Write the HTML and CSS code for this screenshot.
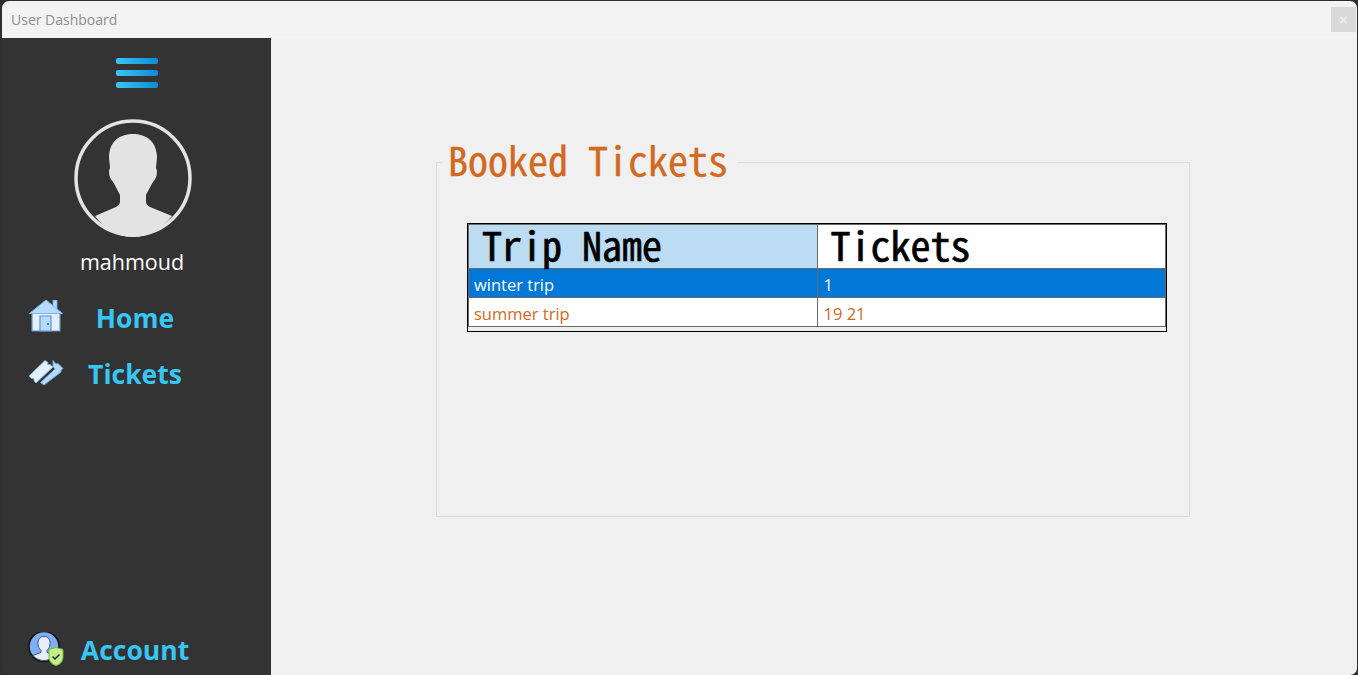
FILE: index.html
```html
<!DOCTYPE html>
<html lang="en">
<head>
    <meta charset="UTF-8">
    <title>User Dashboard</title>
    <link rel="stylesheet" href="styles.css">
</head>
<body>
    <div class="window">
        <header class="titlebar">
            <span class="title">User Dashboard</span>
            <button class="close" type="button">&#215;</button>
        </header>
        <div class="content">
            <aside class="sidebar">
                <svg class="menu-icon" width="42" height="30" viewBox="0 0 42 30">
                    <defs>
                        <linearGradient id="menuGrad">
                            <stop offset="0" stop-color="#38c6f4"/>
                            <stop offset="1" stop-color="#118ad6"/>
                        </linearGradient>
                    </defs>
                    <rect y="0" width="42" height="6" rx="2" fill="url(#menuGrad)"/>
                    <rect y="12" width="42" height="6" rx="2" fill="url(#menuGrad)"/>
                    <rect y="24" width="42" height="6" rx="2" fill="url(#menuGrad)"/>
                </svg>
                <svg class="avatar" width="118" height="118" viewBox="0 0 118 118">
                    <circle cx="59" cy="59" r="57" fill="none" stroke="#e3e3e3" stroke-width="3.500"/>
                    <path fill="#e3e3e3" d="M59 15C47 15 36 21 35 37C35 42 36 46 36 49L35 52C35 56 36 60 39 63C42 68 44 72 46 76L46 83C46 85 44 87 42 88L21 97C31 110 44 118 59 118C74 118 87 110 98 97L76 88C74 87 72 85 72 83L72 76C74 72 76 68 79 63C82 60 83 56 83 52L82 49C82 46 83 42 83 37C82 21 71 15 59 15Z"/>
                </svg>
                <div class="username">mahmoud</div>
                <nav class="nav">
                    <a class="nav-item" href="#">
                        <svg class="nav-icon" width="36" height="36" viewBox="0 2 36 36">
                            <path d="M25 2h4v9h-4z" fill="#b5d9ff" stroke="#6fa8dc"/>
                            <path d="M4 14h28v19H4z" fill="#e3f1ff" stroke="#5c96cf" stroke-width="1.200"/>
                            <path d="M1.500 15.500 18 2l16.500 13.500z" fill="#b5d9ff" stroke="#7fb4e6" stroke-linejoin="round"/>
                            <path d="M12 18h11v15H12z" fill="#b5d9ff" stroke="#5c96cf" stroke-width="1.200"/>
                            <rect x="19" y="25" width="2" height="2" fill="#3f7fbf"/>
                        </svg>
                        <span class="nav-label">Home</span>
                    </a>
                    <a class="nav-item" href="#">
                        <svg class="nav-icon" width="36" height="36" viewBox="0 0 36 36">
                            <path d="M25 4.500 28 8 30 7.500 35 12.500 33 14 33 16 16 29 12.500 26.500 27 13 25 10.500z" fill="#b5d9ff" stroke="#6fa8dc"/>
                            <path d="M1 20 17 4.500 20 6.500 19.500 8.500 22 8.500 25 11 8 27 6 25 6 22.500 3.500 22.500z" fill="#e3f1ff" stroke="#7fb4e6"/>
                        </svg>
                        <span class="nav-label">Tickets</span>
                    </a>
                </nav>
                <a class="nav-item account" href="#">
                    <svg class="nav-icon" width="36" height="36" viewBox="0 1.500 36 36">
                        <circle cx="16" cy="16" r="15" fill="#7eaef5" stroke="#141414" stroke-width="1.500"/>
                        <path d="M16 6c4 0 6 3 6 7 0 3-1 5-3 7v2l8 3c-3 3-7 5-11 5s-9-2-11-5l8-3v-2c-2-2-3-4-3-7 0-4 2-7 6-7z" fill="#e6eefc" stroke="#2c3a55" stroke-width=".8"/>
                        <path d="M28 17l7 2v7c0 5-3 8-7 9-4-1-7-4-7-9v-7z" fill="#c3f08a" stroke="#75b84a"/>
                        <path d="M24.500 26l2.500 2.500 4.500-4.500" fill="none" stroke="#1c2a14" stroke-width="1.500"/>
                    </svg>
                    <span class="nav-label">Account</span>
                </a>
            </aside>
            <main class="main">
                <fieldset class="panel">
                    <legend class="panel-title">Booked Tickets</legend>
                    <div class="table-wrap">
                        <table class="tickets">
                            <thead>
                                <tr>
                                    <th class="sorted">Trip Name</th>
                                    <th>Tickets</th>
                                </tr>
                            </thead>
                            <tbody>
                                <tr class="selected">
                                    <td>winter trip</td>
                                    <td>1</td>
                                </tr>
                                <tr>
                                    <td>summer trip</td>
                                    <td>19 21</td>
                                </tr>
                            </tbody>
                        </table>
                    </div>
                </fieldset>
            </main>
        </div>
    </div>
</body>
</html>
```

FILE: styles.css
```css
* {
    box-sizing: border-box;
}
html, body {
    height: 100%;
}
body {
    margin: 0;
    background: #2e2e2e;
    font-family: "Open Sans", "Noto Sans", sans-serif;
    overflow: hidden;
}
.window {
    height: 675px;
    margin: 0 1px 0 2px;
    padding-top: 1px;
    display: flex;
    flex-direction: column;
}
.titlebar {
    height: 37px;
    flex: none;
    display: flex;
    align-items: center;
    justify-content: space-between;
    padding: 0 1px 0 9px;
    background: #f3f3f3;
    border-radius: 7px 7px 0 0;
}
.title {
    font-size: 14px;
    color: #8e8e8e;
}
.close {
    width: 25px;
    height: 25px;
    padding: 0;
    border: none;
    background: #d9d9d9;
    color: #eeeeee;
    font-size: 15px;
    font-weight: bold;
}
.content {
    flex: 1;
    display: flex;
    min-height: 0;
}
.sidebar {
    width: 269px;
    flex: none;
    display: flex;
    flex-direction: column;
    align-items: flex-start;
    background: #333333;
    border-radius: 0 0 0 7px;
}
.menu-icon {
    margin: 20px 0 0 114px;
}
.avatar {
    margin: 31px 0 0 72px;
}
.username {
    width: 260px;
    margin-top: 10px;
    text-align: center;
    font-size: 21.500px;
    line-height: 30px;
    color: #ffffff;
}
.nav {
    display: flex;
    flex-direction: column;
    gap: 20px;
    margin-top: 23px;
}
.nav-item {
    display: flex;
    align-items: center;
    padding-left: 26px;
    text-decoration: none;
    height: 36px;
}
.nav-icon {
    flex: none;
}
.nav-label {
    width: 142px;
    text-align: center;
    font-size: 26.500px;
    font-weight: 700;
    color: #38c6f4;
}
.account {
    margin-top: auto;
    margin-bottom: 7px;
}
.main {
    flex: 1;
    background: #f0f0f0;
    padding: 103px 0 0 165px;
    border-radius: 0 0 7px 0;
}
.panel {
    width: 754px;
    height: 376px;
    margin: 0;
    padding: 0;
    border: 1px solid #dcdcdc;
}
.panel-title {
    margin-left: 5px;
    padding: 0 9px 6px 6px;
    font-family: "Noto Sans Mono CJK JP", "Noto Sans CJK JP", "Liberation Mono", monospace;
    font-feature-settings: "hwid";
    font-size: 40px;
    line-height: 36px;
    color: #d2691e;
    -webkit-text-stroke: 0.3px #d2691e;
}
.table-wrap {
    width: 700px;
    height: 109px;
    margin: 40px 0 0 30px;
    border: 1px solid #000000;
}
.tickets {
    width: 100%;
    border-collapse: collapse;
    table-layout: fixed;
    background: #ffffff;
}
.tickets th {
    height: 44px;
    padding: 0 0 6px 13px;
    text-align: left;
    font-family: "Noto Sans Mono CJK JP", "Noto Sans CJK JP", "Liberation Mono", monospace;
    font-feature-settings: "hwid";
    font-size: 40px;
    line-height: 36px;
    font-weight: 400;
    color: #000000;
    -webkit-text-stroke: 0.7px #000000;
    border: 1px solid #696969;
}
.tickets th.sorted {
    background: #bcdcf4;
}
.tickets td {
    height: 29px;
    padding: 2px 0 0 5px;
    font-size: 16.500px;
    color: #d2691e;
    border: 1px solid #696969;
}
.tickets td + td {
    padding-left: 6px;
}
.tickets tr.selected td {
    background: #0078d7;
    color: #ffffff;
}
```
